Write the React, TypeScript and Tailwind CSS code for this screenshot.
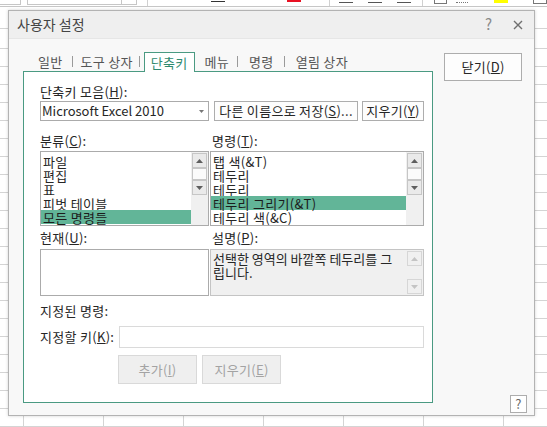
import React from "react";

const FONT = "font-['Noto_Sans_CJK_KR','Noto_Sans',sans-serif]";

const Tri = ({ up, disabled }: { up?: boolean; disabled?: boolean }) => (
  <svg width="7" height="4" viewBox="0 0 7 4">
    <path d={up ? "M0 4L3.5 0L7 4Z" : "M0 0L3.5 4L7 0Z"} fill={disabled ? "#c4c4c4" : "#5e5e5e"} />
  </svg>
);

const ScrollBar = ({ disabled = false }: { disabled?: boolean }) => (
  <div className="flex w-[17px] flex-col p-px">
    <div
      className={`flex h-[15px] items-center justify-center border ${
        disabled ? "border-[#d6d6d6] bg-[#f0f0f0]" : "border-[#c6c6c6] bg-[#eaeaea]"
      }`}
    >
      <Tri up disabled={disabled} />
    </div>
    <div className="flex-1" />
    {!disabled && <div className="h-[12px] border border-[#c6c6c6] bg-[#fbfbfb]" />}
    <div
      className={`flex h-[15px] items-center justify-center border ${
        disabled ? "border-[#d6d6d6] bg-[#f0f0f0]" : "border-[#c6c6c6] bg-[#eaeaea]"
      }`}
    >
      <Tri disabled={disabled} />
    </div>
  </div>
);

const ListBox = ({ items, selected, className }: { items: string[]; selected: number; className: string }) => (
  <div className={`flex h-[75px] border border-[#ababab] bg-white ${className}`}>
    <div className="flex flex-1 flex-col pt-[2px]">
      {items.map((t, i) => (
        <div
          key={i}
          className={`h-[14px] whitespace-nowrap pl-[2px] leading-[16px] ${
            i === selected ? "bg-[#62b598] text-[#1c1c1c]" : "text-[#262626]"
          }`}
        >
          {t}
        </div>
      ))}
    </div>
    <div className="bg-[#f0f0f0]">
      <ScrollBar />
    </div>
  </div>
);

const Button = ({ children, className }: { children: React.ReactNode; className: string }) => (
  <div
    className={`flex items-center justify-center whitespace-nowrap border border-[#adadad] bg-[#fdfdfd] text-[#262626] ${className}`}
  >
    {children}
  </div>
);

const Sep = ({ className }: { className: string }) => (
  <div className={`mb-[4px] h-[11px] w-px bg-[#9a9a9a] ${className}`} />
);

const ExcelBackground = () => {
  const rows = Array.from({ length: 21 });
  const cols = Array.from({ length: 7 });
  return (
    <div className="flex h-full w-full flex-col bg-white">
      <div className="flex h-[8px] items-start overflow-hidden border-b border-[#c6c6c6]">
        <div className="h-[5px] w-[22px] border-b border-r border-[#c6c6c6]" />
        <div className="ml-[6px] flex h-[5px] w-[117px] justify-end border-b border-x border-[#c6c6c6]">
          <div className="h-full w-[15px] border-l border-[#c6c6c6]" />
        </div>
        <div className="ml-[10px] h-[6px] w-px bg-[#d0d0d0]" />
        <div className="ml-[63px] mt-[1px] h-px w-[15px] bg-[#333]" />
        <div className="ml-[62px] h-[2px] w-[15px] bg-[#e81123]" />
        <div className="ml-[28px] h-[6px] w-px bg-[#d0d0d0]" />
        <div className="ml-[9px] mt-[2px] h-px w-[15px] bg-[#555]" />
        <div className="ml-[15px] mt-[2px] h-px w-[15px] bg-[#555]" />
        <div className="ml-[15px] mt-[2px] h-px w-[15px] bg-[#555]" />
        <div className="ml-[11px] h-[6px] w-px bg-[#d0d0d0]" />
        <div className="ml-[11px] h-[4px] w-[14px] border-b border-x border-[#777]" />
        <div className="ml-[9px] mt-[2px] h-px w-[12px] border-t border-dotted border-[#777]" />
        <div className="ml-[26px] h-[3px] w-[15px] bg-[#ffff00]" />
        <div className="ml-[25px] h-[4px] w-[15px] border-b border-x border-[#777]" />
      </div>
      <div className="h-[23px] border-b border-[#d4d4d4]" />
      <div className="h-[22px] border-b border-[#d4d4d4]" />
      {rows.map((_, r) => (
        <div key={r} className="flex h-[18px] shrink-0 border-b border-[#d4d4d4]">
          <div className="w-[24px] shrink-0 border-r border-[#d4d4d4]" />
          {cols.map((_, c) => (
            <div key={c} className="w-[80px] shrink-0 border-r border-[#d4d4d4]" />
          ))}
        </div>
      ))}
    </div>
  );
};

export default function App() {
  return (
    <div className={`relative h-[427px] w-[547px] overflow-hidden ${FONT}`}>
      <ExcelBackground />

      <div className="absolute left-[8px] top-[10px] flex h-[406px] w-[527px] flex-col border border-[#b3b3b3] bg-[#f8f8f8] shadow-[0_0_3px_rgba(0,0,0,0.18)]">
        {/* title bar */}
        <div className="flex h-[28px] shrink-0 items-center border-b border-[#e6e6e6] bg-[#efefef] pl-[8px] pr-[11px]">
          <span className="text-[14px] text-[#444]">사용자 설정</span>
          <span className="ml-auto text-[15px] text-[#8a8a8a]">?</span>
          <svg className="ml-[21px]" width="10" height="10" viewBox="0 0 10 10">
            <path d="M1 1L9 9M9 1L1 9" stroke="#6f6f6f" strokeWidth="1.4" />
          </svg>
        </div>

        {/* body */}
        <div className="flex flex-1 text-[13px] tracking-[0.3px]">
          <div className="flex flex-col pl-[14px] pt-[13px]">
            {/* tabs */}
            <div className="flex h-[19px] items-end whitespace-nowrap text-[#555]">
              <span className="mb-[2px] ml-[15px] leading-[14px]">일반</span>
              <Sep className="ml-[9px]" />
              <span className="mb-[2px] ml-[8px] leading-[14px]">도구 상자</span>
              <Sep className="ml-[6px]" />
              <div className="relative z-10 -mb-px ml-[4px] flex h-[20px] items-center border-x border-t border-[#4a9a82] bg-white px-[6px] text-[#2f8a6f]">
                단축키
              </div>
              <span className="mb-[2px] ml-[10px] leading-[14px]">메뉴</span>
              <Sep className="ml-[8px]" />
              <span className="mb-[2px] ml-[11px] leading-[14px]">명령</span>
              <Sep className="ml-[10px]" />
              <span className="mb-[2px] ml-[11px] leading-[14px]">열림 상자</span>
            </div>

            {/* panel */}
            <div className="flex h-[332px] w-[410px] flex-col border border-[#4a9a82] bg-white pl-[16px] pr-[8px] pt-[13px] text-[#262626]">
              <div className="leading-[14px]">
                단축키 모음(<u>H</u>):
              </div>
              <div className="mt-[2px] flex h-[20px]">
                <div className="flex w-[169px] items-center border border-[#ababab] bg-white pl-[1px] pr-[4px]">
                  <span className="tracking-normal">Microsoft Excel 2010</span>
                  <svg className="ml-auto" width="5" height="3" viewBox="0 0 5 3">
                    <path d="M0 0L2.5 3L5 0Z" fill="#777" />
                  </svg>
                </div>
                <Button className="ml-[5px] w-[144px]">
                  다른 이름으로 저장(<u>S</u>)...
                </Button>
                <Button className="ml-[4px] w-[62px]">
                  지우기(<u>Y</u>)
                </Button>
              </div>

              <div className="mt-[13px] flex leading-[14px]">
                <div className="w-[170px]">
                  분류(<u>C</u>):
                </div>
                <div className="pl-[2px]">
                  명령(<u>T</u>):
                </div>
              </div>
              <div className="mt-[3px] flex gap-px">
                <ListBox className="w-[169px]" items={["파일", "편집", "표", "피벗 테이블", "모든 명령들"]} selected={4} />
                <ListBox
                  className="w-[214px]"
                  items={["탭 색(&T)", "테두리", "테두리", "테두리 그리기(&T)", "테두리 색(&C)"]}
                  selected={3}
                />
              </div>

              <div className="mt-[5px] flex leading-[14px]">
                <div className="w-[170px]">
                  현재(<u>U</u>):
                </div>
                <div className="pl-[2px]">
                  설명(<u>P</u>):
                </div>
              </div>
              <div className="mt-[4px] flex h-[47px] gap-px">
                <div className="w-[169px] border border-[#ababab] bg-white" />
                <div className="flex w-[214px] border border-[#c4c4c4] bg-[#f0f0f0]">
                  <div className="flex-1 whitespace-nowrap pl-[2px] pt-[2px] leading-[14px] tracking-normal text-[#262626]">
                    선택한 영역의 바깥쪽 테두리를 그
                    <br />
                    립니다.
                  </div>
                  <ScrollBar disabled />
                </div>
              </div>

              <div className="mt-[8px] leading-[14px]">지정된 명령:</div>

              <div className="mt-[8px] flex h-[22px] items-center">
                <div className="w-[79px] whitespace-nowrap leading-[14px]">
                  지정할 키(<u>K</u>):
                </div>
                <div className="h-full w-[305px] border border-[#dadada] bg-white" />
              </div>

              <div className="mt-[7px] flex gap-[5px] pl-[78px] text-[#a3a3a3]">
                <div className="flex h-[29px] w-[79px] items-center justify-center border border-[#d9d9d9] bg-[#efefef]">
                  추가(<u>I</u>)
                </div>
                <div className="flex h-[29px] w-[79px] items-center justify-center border border-[#d9d9d9] bg-[#efefef]">
                  지우기(<u>E</u>)
                </div>
              </div>
            </div>
          </div>

          {/* right column */}
          <div className="flex flex-1 flex-col pb-[2px] pl-[11px] pr-[7px] pt-[14px]">
            <Button className="h-[28px] w-[78px] bg-[#f8f8f8]">
              닫기(<u>D</u>)
            </Button>
            <div className="mt-auto flex h-[18px] w-[17px] items-center justify-center self-end border border-[#adadad] bg-white text-[13px] text-[#666]">
              ?
            </div>
          </div>
        </div>
      </div>
    </div>
  );
}
